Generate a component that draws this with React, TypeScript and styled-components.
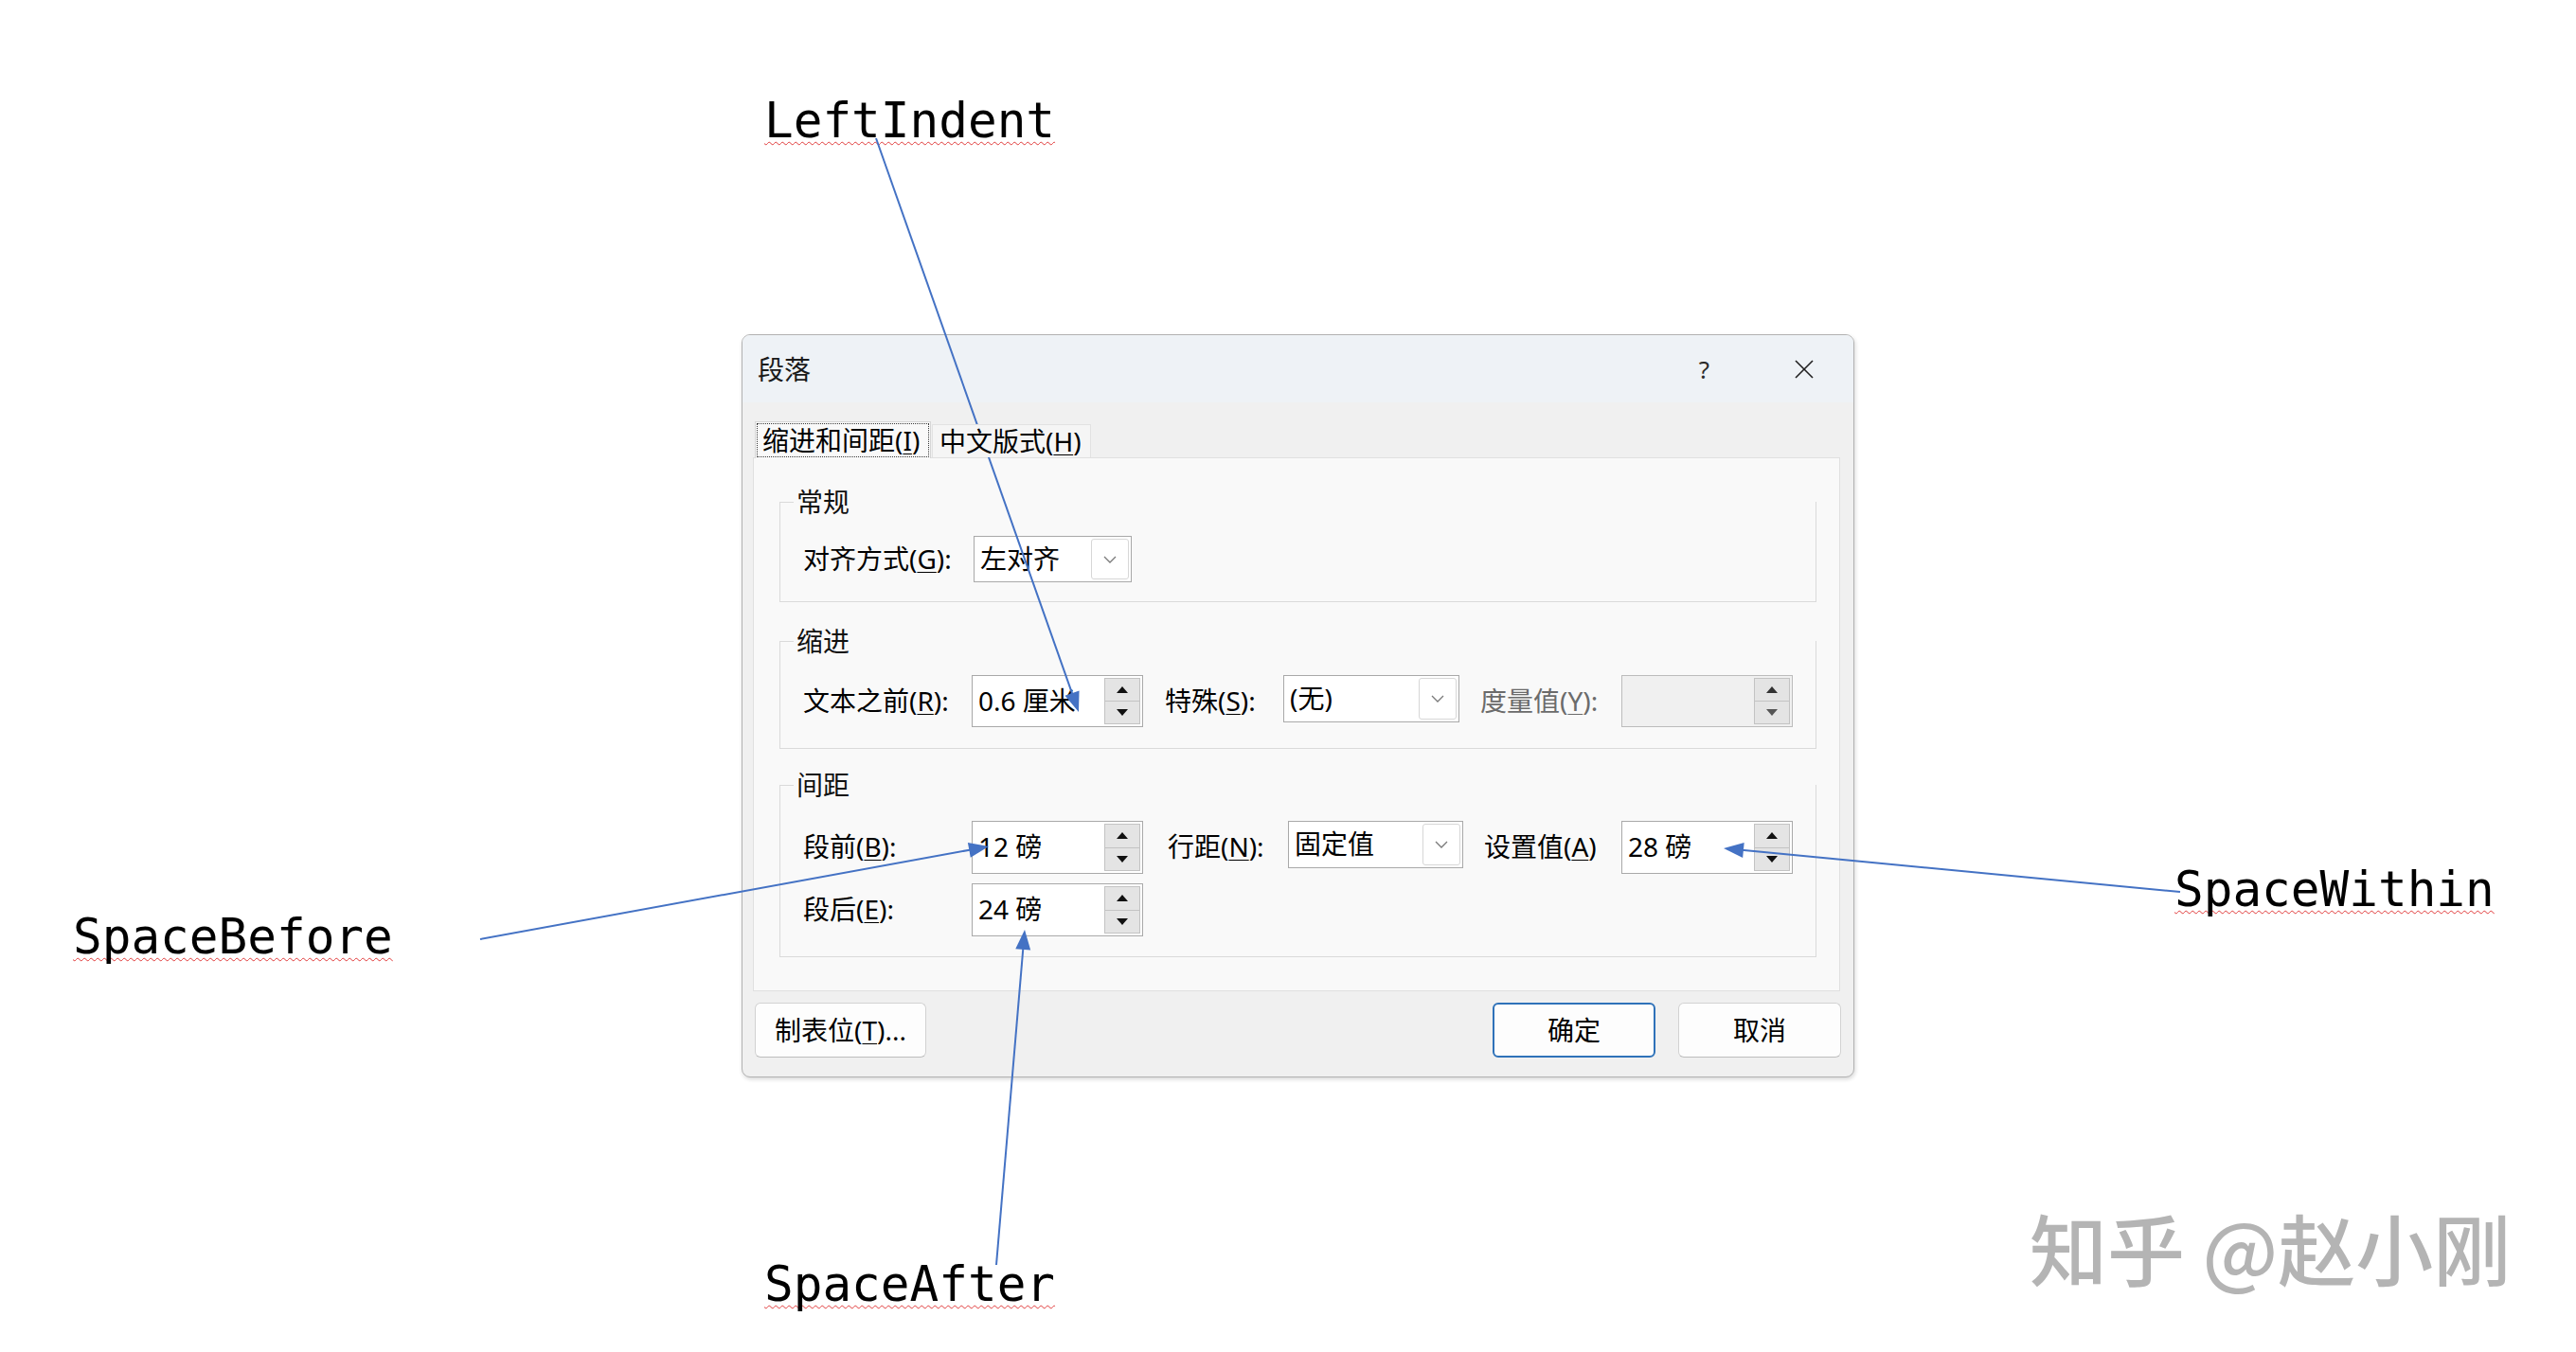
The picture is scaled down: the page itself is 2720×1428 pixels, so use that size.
import React from 'react';
import styled, { createGlobalStyle } from 'styled-components';

const GlobalStyle = createGlobalStyle`
  html, body { margin: 0; padding: 0; background: #ffffff; }
  body { font-family: "Noto Sans", "Noto Sans CJK SC", sans-serif; }
`;

const Page = styled.div`
  position: relative;
  width: 2720px;
  height: 1428px;
  overflow: hidden;
  background: #ffffff;
  padding: 353px 0 0 783px;
  box-sizing: border-box;
`;

const Dialog = styled.div`
  width: 1175px;
  height: 785px;
  box-sizing: border-box;
  border: 1px solid #b2b2b2;
  border-radius: 9px;
  background: #f0f0f0;
  box-shadow: 1px 2px 4px rgba(0, 0, 0, 0.16);
  display: flex;
  flex-direction: column;
  overflow: hidden;
  font-family: "Noto Sans", "Noto Sans CJK SC", sans-serif;
  font-size: 28px;
  color: #000;
`;

const TitleBar = styled.div`
  flex: none;
  height: 71px;
  background: #eef2f6;
  display: flex;
  align-items: center;
  padding-left: 16px;
`;

const Title = styled.div`
  flex: 1;
  font-size: 28px;
  line-height: 1;
  color: #1a1a1a;
`;

const CaptionButton = styled.div`
  width: 105px;
  height: 71px;
  display: flex;
  align-items: center;
  justify-content: center;
  font-size: 26px;
  color: #2a2a2a;
`;

const TabStrip = styled.div`
  flex: none;
  height: 58px;
  display: flex;
  align-items: flex-end;
  padding-left: 13px;
  gap: 1px;
`;

const Tab = styled.div<{ $active?: boolean; $w: number }>`
  position: relative;
  z-index: 2;
  box-sizing: border-box;
  width: ${(p) => p.$w}px;
  height: ${(p) => (p.$active ? 39 : 35)}px;
  margin-bottom: ${(p) => (p.$active ? -1 : 0)}px;
  background: ${(p) => (p.$active ? '#f9f9f9' : '#f5f5f5')};
  border: 1px solid ${(p) => (p.$active ? '#d6d6d6' : '#e2e2e2')};
  border-bottom: none;
  padding: ${(p) => (p.$active ? '1px 1px 1px 1px' : '0 0 0 7px')};
  display: flex;
  align-items: center;
  white-space: nowrap;
  line-height: 1;
`;

const FocusRect = styled.div`
  box-sizing: border-box;
  width: 100%;
  height: 100%;
  border: 1px dotted #3a3a3a;
  padding-left: 5px;
  display: flex;
  align-items: center;
`;

const Panel = styled.div`
  flex: none;
  height: 564px;
  box-sizing: border-box;
  margin: 0 14px 0 11px;
  background: #f9f9f9;
  border: 1px solid #e0e0e0;
  padding: 0 24px 0 27px;
  display: flex;
  flex-direction: column;
`;

const Group = styled.div<{ $mt: number; $pb: number }>`
  margin-top: ${(p) => p.$mt}px;
  padding-bottom: ${(p) => p.$pb}px;
  border: 1px solid #dadada;
  border-top: none;
  display: flex;
  flex-direction: column;
`;

const GroupHead = styled.div`
  display: flex;
  align-items: center;
  height: 36px;
  margin: -18px 0 0 -1px;
`;

const Tick = styled.div`
  width: 15px;
  height: 1px;
  background: #dadada;
`;

const GroupLabel = styled.span`
  padding-left: 3px;
  line-height: 1;
  color: #111;
`;

const Row = styled.div<{ $cols: string; $mt: number }>`
  display: grid;
  grid-template-columns: ${(p) => p.$cols};
  align-items: center;
  margin-top: ${(p) => p.$mt}px;
  padding-left: 24px;
`;

const Label = styled.div<{ $pad?: number; $disabled?: boolean }>`
  padding-left: ${(p) => p.$pad ?? 0}px;
  white-space: nowrap;
  line-height: 1.2;
  color: ${(p) => (p.$disabled ? '#6b6b6b' : '#000')};
`;

const Key = styled.span`
  text-decoration: underline;
  text-decoration-thickness: 1px;
  text-underline-offset: 3px;
`;

const SpinBox = styled.div<{ $h: number; $disabled?: boolean }>`
  width: 181px;
  height: ${(p) => p.$h}px;
  box-sizing: border-box;
  border: 1px solid ${(p) => (p.$disabled ? '#bcbcbc' : '#a9a9a9')};
  background: ${(p) => (p.$disabled ? '#f0f0f0' : '#ffffff')};
  padding: 2px 2px 2px 6px;
  display: flex;
  align-items: stretch;
`;

const SpinText = styled.div`
  flex: 1;
  display: flex;
  align-items: center;
  white-space: nowrap;
  line-height: 1;
  padding-bottom: 2px;
`;

const SpinButtons = styled.div`
  width: 38px;
  display: flex;
  flex-direction: column;
`;

const SpinBtn = styled.div<{ $down?: boolean }>`
  flex: 1;
  box-sizing: border-box;
  background: #e4e4e4;
  border: 1px solid #c3c3c3;
  margin-top: ${(p) => (p.$down ? -1 : 0)}px;
  display: flex;
  align-items: center;
  justify-content: center;
`;

const Tri = styled.div<{ $down?: boolean; $dim?: boolean }>`
  width: 0;
  height: 0;
  border-left: 6px solid transparent;
  border-right: 6px solid transparent;
  ${(p) =>
    p.$down
      ? `border-top: 7px solid ${p.$dim ? '#555' : '#111'};`
      : `border-bottom: 7px solid ${p.$dim ? '#333' : '#111'};`}
`;

const Combo = styled.div<{ $w: number; $h: number }>`
  align-self: start;
  width: ${(p) => p.$w}px;
  height: ${(p) => p.$h}px;
  box-sizing: border-box;
  border: 1px solid #a9a9a9;
  background: #ffffff;
  padding: 2px 2px 2px 6px;
  display: flex;
  align-items: stretch;
`;

const ComboText = styled.div`
  flex: 1;
  display: flex;
  align-items: center;
  white-space: nowrap;
  line-height: 1;
  padding-bottom: 2px;
`;

const DropButton = styled.div`
  width: 40px;
  box-sizing: border-box;
  border: 1px solid #d7d7d7;
  border-radius: 3px;
  background: #ffffff;
  display: flex;
  align-items: center;
  justify-content: center;
`;

const Footer = styled.div`
  flex: 1;
  display: flex;
  align-items: flex-start;
  padding: 12px 13px 0 13px;
  gap: 24px;
`;

const Spacer = styled.div`
  flex: 1;
`;

const Button = styled.div<{ $w: number; $primary?: boolean }>`
  width: ${(p) => p.$w}px;
  height: 58px;
  box-sizing: border-box;
  border-radius: 6px;
  background: #fdfdfd;
  border: ${(p) => (p.$primary ? '2px solid #2f72b9' : '1px solid #d2d2d2')};
  border-bottom-color: ${(p) => (p.$primary ? '#2f72b9' : '#bdbdbd')};
  display: flex;
  align-items: center;
  justify-content: center;
  line-height: 1;
  white-space: nowrap;
`;

const Overlay = styled.svg`
  position: absolute;
  left: 0;
  top: 0;
  width: 2720px;
  height: 1428px;
  pointer-events: none;
`;

const Annotation = styled.div<{ $x: number; $y: number }>`
  position: absolute;
  left: ${(p) => p.$x}px;
  top: ${(p) => p.$y}px;
  font-family: "DejaVu Sans Mono", "Liberation Mono", monospace;
  font-size: 51px;
  line-height: 1;
  color: #000;
  white-space: nowrap;
  text-decoration: underline wavy #e03a3a;
  text-decoration-thickness: 1px;
  text-underline-offset: 4px;
  text-decoration-skip-ink: none;
`;

const Watermark = styled.div`
  position: absolute;
  left: 2143px;
  top: 1276px;
  font-family: "Noto Sans CJK SC", sans-serif;
  font-weight: 500;
  font-size: 82px;
  line-height: 1;
  color: #b4b4b4;
  white-space: nowrap;
`;

const Chevron = () => (
  <svg width="14" height="8" viewBox="0 0 14 8">
    <polyline points="1,1 7,7 13,1" fill="none" stroke="#7a7a7a" strokeWidth="1.3" />
  </svg>
);

const Spin = ({ value, h, disabled }: { value: string; h: number; disabled?: boolean }) => (
  <SpinBox $h={h} $disabled={disabled}>
    <SpinText>{value}</SpinText>
    <SpinButtons>
      <SpinBtn>
        <Tri $dim={disabled} />
      </SpinBtn>
      <SpinBtn $down>
        <Tri $down $dim={disabled} />
      </SpinBtn>
    </SpinButtons>
  </SpinBox>
);

const Select = ({ value, w, h }: { value: string; w: number; h: number }) => (
  <Combo $w={w} $h={h}>
    <ComboText>{value}</ComboText>
    <DropButton>
      <Chevron />
    </DropButton>
  </Combo>
);

type Arrow = { x1: number; y1: number; x2: number; y2: number };

const arrows: Arrow[] = [
  { x1: 925, y1: 146, x2: 1139, y2: 752 },
  { x1: 507, y1: 992, x2: 1044, y2: 894 },
  { x1: 2302, y1: 942, x2: 1820, y2: 896 },
  { x1: 1052, y1: 1336, x2: 1082, y2: 982 },
];

const ArrowShape = ({ a }: { a: Arrow }) => {
  const dx = a.x2 - a.x1;
  const dy = a.y2 - a.y1;
  const len = Math.hypot(dx, dy);
  const ux = dx / len;
  const uy = dy / len;
  const L = 21;
  const W = 8;
  const bx = a.x2 - ux * L;
  const by = a.y2 - uy * L;
  const nx = -uy;
  const ny = ux;
  const pts = `${a.x2},${a.y2} ${bx + nx * W},${by + ny * W} ${bx - nx * W},${by - ny * W}`;
  return (
    <g>
      <line x1={a.x1} y1={a.y1} x2={bx + ux * 2} y2={by + uy * 2} stroke="#4472c4" strokeWidth="2" />
      <polygon points={pts} fill="#4472c4" />
    </g>
  );
};

const CloseIcon = () => (
  <svg width="20" height="20" viewBox="0 0 20 20">
    <line x1="1" y1="1" x2="19" y2="19" stroke="#1f1f1f" strokeWidth="1.6" />
    <line x1="19" y1="1" x2="1" y2="19" stroke="#1f1f1f" strokeWidth="1.6" />
  </svg>
);

export default function App() {
  return (
    <>
      <GlobalStyle />
      <Page>
        <Dialog>
          <TitleBar>
            <Title>段落</Title>
            <CaptionButton>?</CaptionButton>
            <CaptionButton>
              <CloseIcon />
            </CaptionButton>
          </TitleBar>
          <TabStrip>
            <Tab $active $w={186}>
              <FocusRect>
                缩进和间距(<Key>I</Key>)
              </FocusRect>
            </Tab>
            <Tab $w={168}>
              中文版式(<Key>H</Key>)
            </Tab>
          </TabStrip>
          <Panel>
            <Group $mt={46} $pb={20}>
              <GroupHead>
                <Tick />
                <GroupLabel>常规</GroupLabel>
              </GroupHead>
              <Row $cols="180px 167px" $mt={18}>
                <Label>
                  对齐方式(<Key>G</Key>):
                </Label>
                <Select value="左对齐" w={167} h={49} />
              </Row>
            </Group>
            <Group $mt={41} $pb={22}>
              <GroupHead>
                <Tick />
                <GroupLabel>缩进</GroupLabel>
              </GroupHead>
              <Row $cols="178px 181px 148px 186px 171px 181px" $mt={18}>
                <Label>
                  文本之前(<Key>R</Key>):
                </Label>
                <Spin value="0.6 厘米" h={55} />
                <Label $pad={23}>
                  特殊(<Key>S</Key>):
                </Label>
                <Select value="(无)" w={186} h={50} />
                <Label $pad={22} $disabled>
                  度量值(<Key>Y</Key>):
                </Label>
                <Spin value="" h={55} disabled />
              </Row>
            </Group>
            <Group $mt={38} $pb={21}>
              <GroupHead>
                <Tick />
                <GroupLabel>间距</GroupLabel>
              </GroupHead>
              <Row $cols="178px 181px 153px 185px 167px 181px" $mt={20}>
                <Label>
                  段前(<Key>B</Key>):
                </Label>
                <Spin value="12 磅" h={56} />
                <Label $pad={26}>
                  行距(<Key>N</Key>):
                </Label>
                <Select value="固定值" w={185} h={50} />
                <Label $pad={22}>
                  设置值(<Key>A</Key>)
                </Label>
                <Spin value="28 磅" h={56} />
              </Row>
              <Row $cols="178px 181px" $mt={10}>
                <Label>
                  段后(<Key>E</Key>):
                </Label>
                <Spin value="24 磅" h={56} />
              </Row>
            </Group>
          </Panel>
          <Footer>
            <Button $w={181}>
              制表位(<Key>T</Key>)...
            </Button>
            <Spacer />
            <Button $w={172} $primary>
              确定
            </Button>
            <Button $w={172}>取消</Button>
          </Footer>
        </Dialog>

        <Annotation $x={807} $y={102}>LeftIndent</Annotation>
        <Annotation $x={77} $y={964}>SpaceBefore</Annotation>
        <Annotation $x={2296} $y={914}>SpaceWithin</Annotation>
        <Annotation $x={807} $y={1331}>SpaceAfter</Annotation>

        <Overlay viewBox="0 0 2720 1428">
          {arrows.map((a, i) => (
            <ArrowShape key={i} a={a} />
          ))}
        </Overlay>

        <Watermark>知乎 @赵小刚</Watermark>
      </Page>
    </>
  );
}
